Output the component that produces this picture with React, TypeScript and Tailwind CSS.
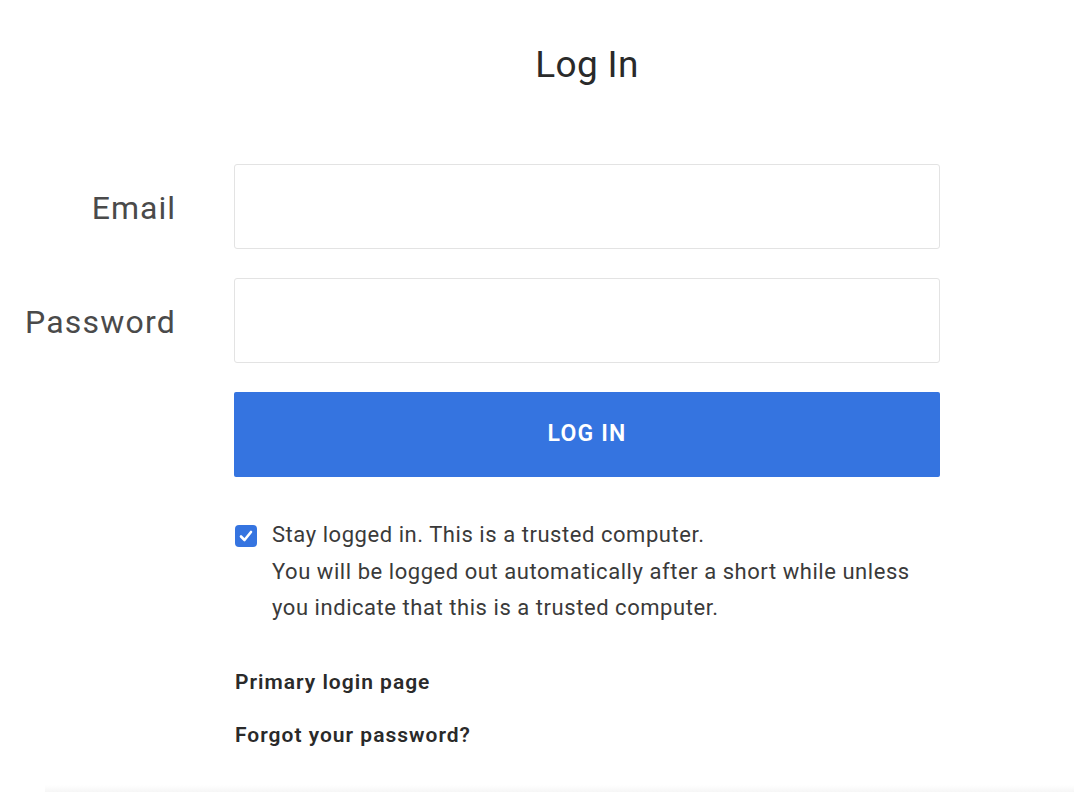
import React from "react";

export default function App() {
  return (
    <div className="relative min-h-[792px] w-full bg-white font-['Roboto',sans-serif] text-[#333]">
      <div className="flex flex-col pl-[234px] w-[940px]">
        <h1 className="mt-[43px] h-[44px] text-center text-[37px] leading-[44px] font-normal tracking-[0.3px] text-[#2a2a2a]">
          Log In
        </h1>
      </div>

      <div className="mt-[77px] flex flex-col gap-[29px]">
        <div className="flex items-center">
          <label className="mt-[2px] w-[176px] text-right text-[32px] leading-[40px] tracking-[1px] text-[#4a4a4a]">Email</label>
          <input
            type="email"
            className="ml-[58px] h-[85px] w-[706px] rounded-[3px] border border-[#e3e3e3] bg-white px-4 outline-none"
          />
        </div>
        <div className="flex items-center">
          <label className="mt-[2px] w-[176px] text-right text-[32px] leading-[40px] tracking-[1.2px] text-[#4a4a4a]">Password</label>
          <input
            type="password"
            className="ml-[58px] h-[85px] w-[706px] rounded-[3px] border border-[#e3e3e3] bg-white px-4 outline-none"
          />
        </div>
      </div>

      <div className="ml-[234px] w-[706px]">
        <button className="mt-[29px] flex h-[85px] w-[706px] items-center justify-center rounded-[2px] bg-[#3574e0] text-[23px] font-semibold tracking-[1.2px] text-white">
          LOG IN
        </button>

        <div className="mt-[40px] flex items-start">
          <div className="mt-[8px] ml-[1px] flex h-[22px] w-[22px] items-center justify-center rounded-[4px] bg-[#3574e0]">
            <svg width="18" height="18" viewBox="0 0 18 18" fill="none">
              <path d="M4 9.5 L7.5 13 L14 5" stroke="white" strokeWidth="2.6" strokeLinecap="round" strokeLinejoin="round" />
            </svg>
          </div>
          <div className="ml-[15px] text-[22px] leading-[36.5px] tracking-[0.55px] text-[#3a3a3a]">
            <div>Stay logged in. This is a trusted computer.</div>
            <div>You will be logged out automatically after a short while unless</div>
            <div>you indicate that this is a trusted computer.</div>
          </div>
        </div>

        <div className="mt-[41px] flex flex-col gap-[25px] pl-[1px]">
          <a className="text-[21px] font-semibold leading-[28px] tracking-[1px] text-[#2a2a2a]">Primary login page</a>
          <a className="text-[21px] font-semibold leading-[28px] tracking-[1px] text-[#2a2a2a]">Forgot your password?</a>
        </div>
      </div>

      <div className="absolute bottom-0 left-[45px] right-0 h-[7px] bg-gradient-to-b from-white to-[#f6f6f6]" />
    </div>
  );
}
